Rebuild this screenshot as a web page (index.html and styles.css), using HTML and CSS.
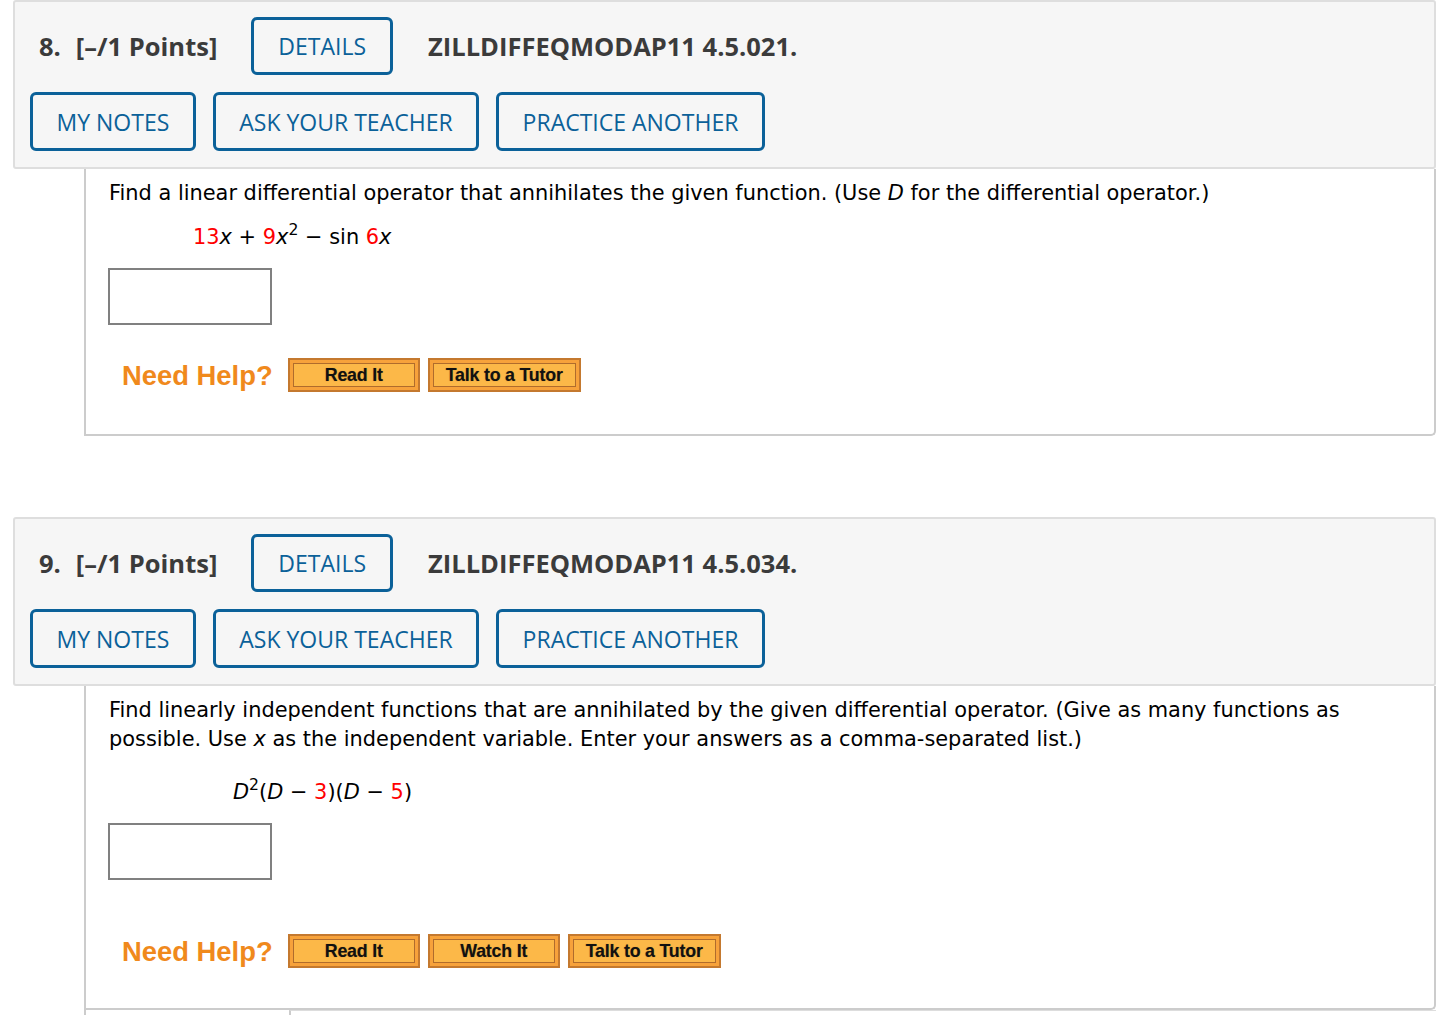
FILE: index.html
```html
<!DOCTYPE html>
<html lang="en">
<head>
<meta charset="utf-8">
<title>Questions</title>
<link rel="stylesheet" href="styles.css">
</head>
<body>
<main class="page">
  <section class="question">
    <div class="q-head">
      <div class="q-title-row">
        <span class="q-num">8.</span>
        <span class="q-points">[–/1 Points]</span>
        <button class="btn btn-details">DETAILS</button>
        <span class="q-code">ZILLDIFFEQMODAP11 4.5.021.</span>
      </div>
      <div class="q-actions">
        <button class="btn">MY NOTES</button>
        <button class="btn">ASK YOUR TEACHER</button>
        <button class="btn">PRACTICE ANOTHER</button>
      </div>
    </div>
    <div class="q-body q-body-1">
      <p class="q-text">Find a linear differential operator that annihilates the given function. (Use <i>D</i> for the differential operator.)</p>
      <p class="math math-1"><span class="red">13</span><i>x</i> + <span class="red">9</span><i>x</i><sup>2</sup> − sin <span class="red">6</span><i>x</i></p>
      <div class="answer"></div>
      <div class="help help-1">
        <span class="help-label">Need Help?</span>
        <button class="hbtn hbtn-short"><span>Read It</span></button>
        <button class="hbtn hbtn-long"><span>Talk to a Tutor</span></button>
      </div>
    </div>
  </section>

  <section class="question question-2">
    <div class="q-head">
      <div class="q-title-row">
        <span class="q-num">9.</span>
        <span class="q-points">[–/1 Points]</span>
        <button class="btn btn-details">DETAILS</button>
        <span class="q-code">ZILLDIFFEQMODAP11 4.5.034.</span>
      </div>
      <div class="q-actions">
        <button class="btn">MY NOTES</button>
        <button class="btn">ASK YOUR TEACHER</button>
        <button class="btn">PRACTICE ANOTHER</button>
      </div>
    </div>
    <div class="q-body q-body-2">
      <p class="q-text">Find linearly independent functions that are annihilated by the given differential operator. (Give as many functions as possible. Use <i>x</i> as the independent variable. Enter your answers as a comma-separated list.)</p>
      <p class="math math-2"><i>D</i><sup>2</sup>(<i>D</i> − <span class="red">3</span>)(<i>D</i> − <span class="red">5</span>)</p>
      <div class="answer"></div>
      <div class="help help-2">
        <span class="help-label">Need Help?</span>
        <button class="hbtn hbtn-short"><span>Read It</span></button>
        <button class="hbtn hbtn-short"><span>Watch It</span></button>
        <button class="hbtn hbtn-long"><span>Talk to a Tutor</span></button>
      </div>
    </div>
    <div class="q-foot"><div class="q-foot-cell"></div></div>
  </section>
</main>
</body>
</html>
```

FILE: styles.css
```css
html, body {
  margin: 0;
  padding: 0;
  background: #ffffff;
  overflow: hidden;
}

.page {
  padding: 0 17px 0 13px;
}

.question-2 {
  margin-top: 81px;
}

.q-head {
  background: #f6f6f6;
  border: 2px solid #dedede;
  border-radius: 3px;
  padding: 15px 0 16px 15px;
  font-family: "Open Sans", sans-serif;
}

.q-title-row {
  display: flex;
  align-items: center;
  height: 58px;
  padding-left: 9px;
}

.q-num,
.q-points,
.q-code {
  font-size: 25.5px;
  font-weight: 700;
  color: #3b3b3b;
}

.q-num {
  margin-right: 15px;
}

.q-points {
  margin-right: 34px;
}

.btn-details {
  margin-right: 35px;
}

.btn {
  box-sizing: border-box;
  height: 58px;
  padding: 0 24px;
  background: transparent;
  border: 3px solid #0b6199;
  border-radius: 6px;
  color: #0b6199;
  font-family: "Open Sans", sans-serif;
  font-size: 23px;
  font-weight: 400;
  cursor: pointer;
}

.q-actions {
  display: flex;
  gap: 17px;
  margin-top: 17px;
}

.q-actions .btn {
  height: 59px;
  padding: 0 23.5px;
}

.q-body {
  margin-left: 71px;
  border: 2px solid #cccccc;
  border-top: none;
  border-bottom-right-radius: 5px;
  padding: 10px 24px 0 23px;
  font-family: "DejaVu Sans", Verdana, sans-serif;
  font-size: 20.9px;
  line-height: 29px;
  color: #000;
}

.q-body-1 {
  padding-bottom: 42px;
}

.q-body-2 {
  padding-bottom: 40px;
}

.q-text {
  margin: 0;
}

.math {
  margin: 0;
}

.math-1 {
  margin-top: 15px;
  padding-left: 84px;
}

.math-2 {
  margin-top: 24px;
  padding-left: 124px;
}

.math sup {
  font-size: 0.75em;
  line-height: 0;
  vertical-align: 0.55em;
}

.red {
  color: #ff0000;
}

.answer {
  box-sizing: border-box;
  width: 164px;
  height: 57px;
  margin-top: 16px;
  margin-left: -1px;
  border: 2px solid #808080;
  background: #fff;
}

.help {
  display: flex;
  align-items: center;
  gap: 8px;
  margin-left: 13px;
}

.help-1 {
  margin-top: 33px;
}

.help-2 {
  margin-top: 54px;
}

.help-label {
  font-family: "Liberation Sans", Arial, sans-serif;
  font-weight: 700;
  font-size: 27.4px;
  color: #f0891c;
  margin-right: 7px;
}

.hbtn {
  box-sizing: border-box;
  height: 34px;
  padding: 3px;
  border: 2px solid #c4792f;
  background: #f7a23b;
  cursor: pointer;
  font-family: "Liberation Sans", Arial, sans-serif;
  font-weight: 700;
  font-size: 17.8px;
  letter-spacing: -0.2px;
  color: #111;
}

.hbtn span {
  display: flex;
  align-items: center;
  justify-content: center;
  height: 100%;
  box-sizing: border-box;
  border: 1px solid #b06c2c;
  background: #fcb848;
  text-shadow: 0 0 1px rgba(0, 0, 0, 0.35);
}

.hbtn-short {
  width: 132px;
}

.hbtn-long {
  width: 153px;
}

.q-foot {
  margin-left: 71px;
  border-left: 2px solid #cccccc;
  height: 20px;
  padding-left: 203px;
}

.q-foot-cell {
  height: 100%;
  border-left: 2px solid #cccccc;
  border-top: 1px solid #dddddd;
}
```
